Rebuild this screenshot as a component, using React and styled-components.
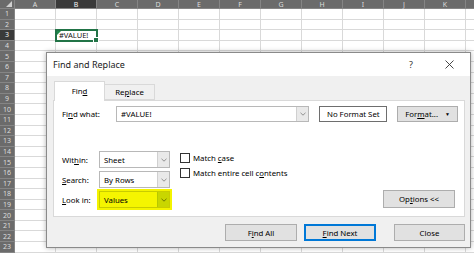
import React from 'react';
import styled, { createGlobalStyle } from 'styled-components';

const GlobalStyle = createGlobalStyle`
  html, body { margin: 0; padding: 0; background: #fff; overflow: hidden; }
  body { font-family: "Noto Sans", "Open Sans", sans-serif; }
`;

const COLS = ['A', 'B', 'C', 'D', 'E', 'F', 'G', 'H', 'I', 'J', 'K', ''];
const ROWS = Array.from({ length: 23 }, (_, i) => i + 1);

// ---------- spreadsheet behind the dialog ----------
const Page = styled.div`
  position: relative;
  width: 474px;
  height: 253px;
  overflow: hidden;
`;

const Sheet = styled.div`
  display: grid;
  grid-template-columns: 15px repeat(12, 41px);
  grid-template-rows: 9px repeat(23, 10.6px);
  font-family: "Noto Sans", sans-serif;
`;

const Corner = styled.div`
  position: relative;
  background: #6b6b6b;
  border-right: 1px solid #858585;
  border-bottom: 1px solid #858585;
  box-sizing: border-box;
  &::after {
    content: '';
    position: absolute;
    right: 2px;
    bottom: 1px;
    border-left: 6px solid transparent;
    border-bottom: 6px solid #d0d0d0;
  }
`;

const Head = styled.div`
  background: ${p => (p.$active ? '#3a3a3a' : '#6b6b6b')};
  color: ${p => (p.$active ? '#f2f2f2' : '#dcdcdc')};
  font-size: 7px;
  line-height: 1;
  display: flex;
  align-items: center;
  justify-content: center;
  border-right: 1px solid #858585;
  border-bottom: 1px solid #858585;
  box-sizing: border-box;
`;

const Cell = styled.div`
  position: relative;
  border-right: 1px solid #d9d9d9;
  border-bottom: 1px solid #d9d9d9;
  box-sizing: border-box;
  font-size: 7.5px;
  color: #111;
  display: flex;
  align-items: center;
  padding-left: 3px;
  ${p => p.$active && `
    outline: 2px solid #217346;
    outline-offset: -1px;
    z-index: 1;
  `}
`;

const ErrorMark = styled.span`
  position: absolute;
  left: 1px;
  top: 1px;
  border-right: 4px solid transparent;
  border-top: 4px solid #1e8a4a;
`;

const FillHandle = styled.span`
  position: absolute;
  right: -3px;
  bottom: -3px;
  width: 4px;
  height: 4px;
  background: #217346;
  border: 1px solid #fff;
`;

// ---------- dialog ----------
const Dialog = styled.div`
  position: absolute;
  left: 46px;
  top: 52px;
  width: 425px;
  height: 196px;
  box-sizing: border-box;
  border: 1px solid #8a8a8a;
  background: #f0f0f0;
  box-shadow: 0 0 5px rgba(0, 0, 0, 0.3);
  display: flex;
  flex-direction: column;
  font-family: "Noto Sans", "Open Sans", sans-serif;
  font-size: 7.8px;
  color: #000;
`;

const TitleBar = styled.div`
  height: 23px;
  background: #fff;
  display: flex;
  align-items: center;
  padding-left: 6px;
  font-size: 9px;
  color: #1a1a1a;
`;

const TitleText = styled.div`
  flex: 1;
`;

const TitleIcon = styled.div`
  width: ${p => p.$w}px;
  display: flex;
  justify-content: center;
  align-items: center;
  font-size: 9px;
  color: #333;
`;

const Body = styled.div`
  flex: 1;
  display: flex;
  flex-direction: column;
  padding: 5px 5px 6px 6px;
`;

const TabRow = styled.div`
  height: 19px;
  display: flex;
  align-items: flex-end;
  padding-left: 1px;
  position: relative;
  z-index: 1;
`;

const Tab = styled.div`
  box-sizing: border-box;
  width: ${p => p.$w}px;
  height: ${p => (p.$active ? 20 : 16)}px;
  margin-bottom: ${p => (p.$active ? -1 : 0)}px;
  background: ${p => (p.$active ? '#fff' : '#f0f0f0')};
  border: 1px solid #d9d9d9;
  border-bottom: ${p => (p.$active ? 'none' : '1px solid #d9d9d9')};
  ${p => !p.$active && 'border-left: none;'}
  display: flex;
  align-items: center;
  justify-content: center;
  padding-bottom: ${p => (p.$active ? 2 : 0)}px;
`;

const Panel = styled.div`
  height: 117px;
  box-sizing: border-box;
  background: #fff;
  border: 1px solid #d9d9d9;
  padding: 5px 6px 8px 8px;
  display: flex;
  flex-direction: column;
`;

const FindRow = styled.div`
  height: 16px;
  display: flex;
  align-items: center;
`;

const Label = styled.div`
  width: ${p => p.$w}px;
  flex-shrink: 0;
`;

const Input = styled.div`
  box-sizing: border-box;
  width: ${p => p.$w}px;
  height: 100%;
  border: 1px solid ${p => (p.$hl ? '#c9cc00' : '#b8b8b8')};
  background: ${p => (p.$hl ? '#f5f500' : '#fff')};
  ${p => p.$hl && 'box-shadow: 0 0 0 2px #f4f400;'}
  display: flex;
  align-items: stretch;
`;

const InputText = styled.div`
  flex: 1;
  display: flex;
  align-items: center;
  padding-left: 4px;
`;

const Arrow = styled.div`
  width: 12px;
  box-sizing: border-box;
  border-left: 1px solid ${p => (p.$hl ? '#b6c800' : '#d0d0d0')};
  background: ${p => (p.$hl ? '#c9d600' : '#e9e9e9')};
  display: flex;
  align-items: center;
  justify-content: center;
`;

const FormatBox = styled.div`
  box-sizing: border-box;
  width: 68px;
  height: 100%;
  margin-left: 10px;
  border: 1px solid #6e6e6e;
  display: flex;
  align-items: center;
  justify-content: center;
`;

const Button = styled.div`
  box-sizing: border-box;
  width: ${p => p.$w}px;
  height: ${p => p.$h || 17}px;
  margin-left: ${p => p.$ml || 0}px;
  margin-right: ${p => p.$mr || 0}px;
  background: #e1e1e1;
  border: 1px solid ${p => (p.$default ? '#0078d7' : '#adadad')};
  ${p => p.$default && 'box-shadow: inset 0 0 0 1px #0078d7;'}
  display: flex;
  align-items: center;
  justify-content: center;
`;

const DropMark = styled.span`
  margin-left: 7px;
  font-size: 5px;
`;

const Options = styled.div`
  margin-top: 29px;
  display: flex;
  align-items: flex-end;
`;

const ComboCol = styled.div`
  display: flex;
  flex-direction: column;
  gap: 3px;
`;

const ComboRow = styled.div`
  height: 17px;
  display: flex;
  align-items: center;
`;

const CheckCol = styled.div`
  align-self: flex-start;
  margin-left: 10px;
  padding-top: 2px;
  display: flex;
  flex-direction: column;
  gap: 5px;
`;

const CheckRow = styled.div`
  display: flex;
  align-items: center;
  gap: 3px;
  height: 10px;
`;

const Box = styled.span`
  box-sizing: border-box;
  width: 10px;
  height: 10px;
  border: 1px solid #333;
  background: #fff;
`;

const Spacer = styled.div`
  flex: 1;
`;

const Footer = styled.div`
  margin-top: 7px;
  display: flex;
  justify-content: flex-end;
`;

const Chevron = ({ color = '#7a7a7a' }) => (
  <svg width="6" height="4" viewBox="0 0 6 4">
    <path d="M0.5 0.8 L3 3.2 L5.5 0.8" fill="none" stroke={color} strokeWidth="0.8" />
  </svg>
);

const Combo = ({ w, text, hl }) => (
  <Input $w={w} $hl={hl}>
    <InputText>{text}</InputText>
    <Arrow $hl={hl}>
      <Chevron color={hl ? '#556000' : '#7a7a7a'} />
    </Arrow>
  </Input>
);

export default function App() {
  return (
    <Page>
      <GlobalStyle />
      <Sheet>
        <Corner />
        {COLS.map((c, i) => (
          <Head key={i} $active={c === 'B'}>{c}</Head>
        ))}
        {ROWS.map(r => (
          <React.Fragment key={r}>
            <Head $active={r === 3}>{r}</Head>
            {COLS.map((c, i) =>
              r === 3 && c === 'B' ? (
                <Cell key={i} $active>
                  <ErrorMark />
                  #VALUE!
                  <FillHandle />
                </Cell>
              ) : (
                <Cell key={i} />
              )
            )}
          </React.Fragment>
        ))}
      </Sheet>

      <Dialog>
        <TitleBar>
          <TitleText>Find and Replace</TitleText>
          <TitleIcon $w={34}>?</TitleIcon>
          <TitleIcon $w={42}>
            <svg width="9" height="9" viewBox="0 0 9 9">
              <path d="M0.5 0.5 L8.5 8.5 M8.5 0.5 L0.5 8.5" stroke="#333" strokeWidth="0.9" />
            </svg>
          </TitleIcon>
        </TitleBar>
        <Body>
          <TabRow>
            <Tab $w={51} $active><span>Fin<u>d</u></span></Tab>
            <Tab $w={50}><span>Re<u>p</u>lace</span></Tab>
          </TabRow>
          <Panel>
            <FindRow>
              <Label $w={54}>Fi<u>n</u>d what:</Label>
              <Combo w={194} text="#VALUE!" />
              <FormatBox>No Format Set</FormatBox>
              <Button $w={61} $h={16} $ml={10}>
                <span>For<u>m</u>at...</span>
                <DropMark>▼</DropMark>
              </Button>
            </FindRow>
            <Options>
              <ComboCol>
                <ComboRow>
                  <Label $w={37}>Wit<u>h</u>in:</Label>
                  <Combo w={71} text="Sheet" />
                </ComboRow>
                <ComboRow>
                  <Label $w={37}><u>S</u>earch:</Label>
                  <Combo w={71} text="By Rows" />
                </ComboRow>
                <ComboRow>
                  <Label $w={37}><u>L</u>ook in:</Label>
                  <Combo w={71} text="Values" hl />
                </ComboRow>
              </ComboCol>
              <CheckCol>
                <CheckRow>
                  <Box />
                  <span>Match <u>c</u>ase</span>
                </CheckRow>
                <CheckRow>
                  <Box />
                  <span>Match entire cell c<u>o</u>ntents</span>
                </CheckRow>
              </CheckCol>
              <Spacer />
              <Button $w={72} $h={18} $mr={3}>
                <span>Op<u>t</u>ions &lt;&lt;</span>
              </Button>
            </Options>
          </Panel>
          <Footer>
            <Button $w={72}><span>F<u>i</u>nd All</span></Button>
            <Button $w={72} $ml={7} $default><span><u>F</u>ind Next</span></Button>
            <Button $w={71} $ml={18}><span>Close</span></Button>
          </Footer>
        </Body>
      </Dialog>
    </Page>
  );
}
